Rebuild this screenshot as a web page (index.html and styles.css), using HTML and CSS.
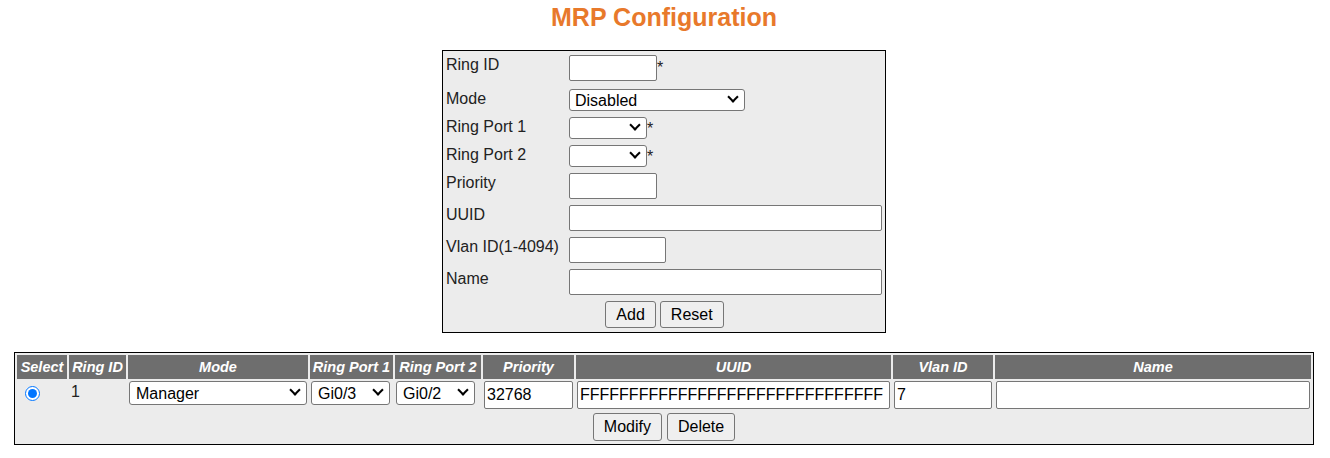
FILE: index.html
```html
<!DOCTYPE html>
<html>
	<head>
		<meta charset="utf-8">
		<title>MRP Configuration</title>
		<link rel="stylesheet" href="styles.css">
	</head>
	<body>
		<h1 class="title">MRP Configuration</h1>

		<!-- new ring entry -->
		<div class="mrp-form">
			<span class="lbl">Ring ID</span>
			<span class="ctl first"><input type="text" class="txt short"><span class="req">*</span></span>

			<span class="lbl">Mode</span>
			<span class="ctl">
				<span class="selbox">
					<select class="sel mode">
						<option>Disabled</option>
						<option>Manager</option>
						<option>Client</option>
					</select>
				</span>
			</span>

			<span class="lbl">Ring Port 1</span>
			<span class="ctl"><span class="selbox"><select class="sel port"><option></option></select></span><span class="req">*</span></span>

			<span class="lbl">Ring Port 2</span>
			<span class="ctl"><span class="selbox"><select class="sel port"><option></option></select></span><span class="req">*</span></span>

			<span class="lbl">Priority</span>
			<span class="ctl"><input type="text" class="txt short"></span>

			<span class="lbl">UUID</span>
			<span class="ctl"><input type="text" class="txt long"></span>

			<span class="lbl">Vlan ID(1-4094)</span>
			<span class="ctl"><input type="text" class="txt vlan"></span>

			<span class="lbl">Name</span>
			<span class="ctl"><input type="text" class="txt long"></span>

			<div class="actions">
				<button class="btn">Add</button>
				<button class="btn">Reset</button>
			</div>
		</div>

		<!-- configured rings -->
		<table class="ring-list">
			<tr>
				<th class="c-sel">Select</th>
				<th class="c-id">Ring ID</th>
				<th class="c-mode">Mode</th>
				<th class="c-p1">Ring Port 1</th>
				<th class="c-p2">Ring Port 2</th>
				<th class="c-prio">Priority</th>
				<th class="c-uuid">UUID</th>
				<th class="c-vlan">Vlan ID</th>
				<th class="c-name">Name</th>
			</tr>
			<tr>
				<td><input type="radio" name="ring" class="pick" checked></td>
				<td class="ring-id">1</td>
				<td>
					<span class="selbox full">
						<select class="sel cell-mode">
							<option>Disabled</option>
							<option selected>Manager</option>
							<option>Client</option>
						</select>
					</span>
				</td>
				<td>
					<span class="selbox">
						<select class="sel cell-port">
							<option>Gi0/1</option>
							<option>Gi0/2</option>
							<option selected>Gi0/3</option>
							<option>Gi0/4</option>
						</select>
					</span>
				</td>
				<td>
					<span class="selbox">
						<select class="sel cell-port">
							<option>Gi0/1</option>
							<option selected>Gi0/2</option>
							<option>Gi0/3</option>
							<option>Gi0/4</option>
						</select>
					</span>
				</td>
				<td><input type="text" class="txt cell" value="32768"></td>
				<td><input type="text" class="txt cell" value="FFFFFFFFFFFFFFFFFFFFFFFFFFFFFFF"></td>
				<td><input type="text" class="txt cell" value="7"></td>
				<td><input type="text" class="txt cell" value=""></td>
			</tr>
			<tr>
				<td colspan="9" class="row-actions">
					<div class="actions wide">
						<button class="btn tall">Modify</button>
						<button class="btn tall">Delete</button>
					</div>
				</td>
			</tr>
		</table>
	</body>
</html>
```

FILE: styles.css
```css
body{
	margin:0 9px 8px 7px;
	font-family:"Liberation Sans",Arial,sans-serif;
	font-size:16px;
	color:#222;
	background-color:#fff;
}
.title{
	margin:3px 0 0 0;
	font-size:25px;
	line-height:29px;
	font-weight:bold;
	color:#e8792b;
	text-align:center;
}

/* form box */
.mrp-form{
	width:444px;
	box-sizing:border-box;
	margin:18px auto 0 auto;
	padding:4px 2px 4px 3px;
	border:1px solid #000;
	background-color:#ececec;
	display:grid;
	grid-template-columns:123px 1fr;
	row-gap:6px;
}
.lbl{
	padding-top:1px;
	line-height:18px;
	white-space:nowrap;
}
.ctl{
	line-height:18px;
	white-space:nowrap;
}
.ctl.first{
	min-height:28px;
}
.req{
	color:#222;
}

.txt{
	box-sizing:border-box;
	height:26px;
	padding:1px 2px;
	border:1px solid #767676;
	border-radius:2px;
	background-color:#fff;
	font-family:"Liberation Sans",Arial,sans-serif;
	font-size:16px;
	color:#000;
	vertical-align:baseline;
}
.txt.short{ width:88px; }
.txt.vlan{ width:97px; }
.txt.long{ width:313px; }

/* select with its own chevron */
.selbox{
	position:relative;
	display:inline-block;
}
.selbox.full{
	display:block;
}
.selbox::after{
	content:"";
	position:absolute;
	right:8px;
	top:calc(50% - 7px);
	width:6px;
	height:6px;
	border-right:2px solid #000;
	border-bottom:2px solid #000;
	transform:rotate(45deg);
	pointer-events:none;
}
.sel{
	-webkit-appearance:none;
	appearance:none;
	box-sizing:border-box;
	display:block;
	height:22px;
	margin:0;
	padding:0 20px 0 5px;
	border:1px solid #767676;
	border-radius:3px;
	background-color:#fff;
	font-family:"Liberation Sans",Arial,sans-serif;
	font-size:16px;
	color:#000;
}
.sel.mode{ width:176px; }
.sel.port{ width:78px; }

.actions{
	grid-column:1 / -1;
	display:flex;
	justify-content:center;
	gap:4px;
}
.actions.wide{
	gap:5px;
}
.btn{
	height:27px;
	padding:0 10px;
	border:1px solid #767676;
	border-radius:3px;
	background-color:#efefef;
	font-family:"Liberation Sans",Arial,sans-serif;
	font-size:16px;
	color:#000;
}
.btn.tall{
	height:28px;
}

/* list of rings */
.ring-list{
	width:1300px;
	margin:19px auto 0 auto;
	table-layout:fixed;
	border:1px solid #000;
	border-spacing:2px;
	background-color:#ececec;
}
.ring-list th{
	box-sizing:border-box;
	height:24px;
	padding:0 1px;
	background-color:#6e6e6e;
	color:#fff;
	font-size:14.5px;
	font-style:italic;
	font-weight:bold;
	text-align:center;
	white-space:nowrap;
}
.ring-list td{
	box-sizing:border-box;
	height:28px;
	padding:0 1px;
	vertical-align:top;
	line-height:18px;
}
.c-sel{ width:50px; }
.c-id{ width:57px; }
.c-mode{ width:180px; }
.c-p1{ width:83px; }
.c-p2{ width:86px; }
.c-prio{ width:91px; }
.c-uuid{ width:315px; }
.c-vlan{ width:100px; }
.c-name{ width:316px; }

.pick{
	width:15px;
	height:15px;
	margin:5px 0 0 7px;
}
.ring-list td.ring-id{
	padding-left:2px;
	padding-top:2px;
}
.sel.cell-mode{
	width:100%;
	height:24px;
	padding-left:6px;
}
.sel.cell-port{
	width:79px;
	height:24px;
	padding-left:6px;
}
.txt.cell{
	width:100%;
	height:28px;
}
.ring-list td.row-actions{
	height:31px;
	padding:2px 1px 1px 1px;
}
```
